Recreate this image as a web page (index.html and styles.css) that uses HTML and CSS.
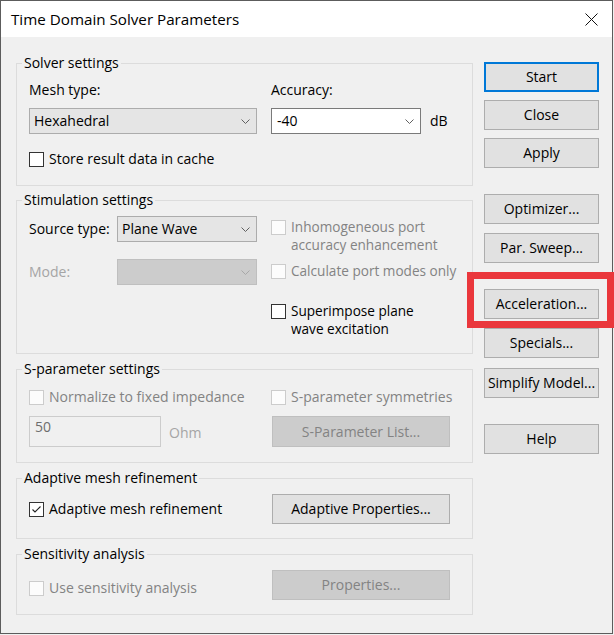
FILE: index.html
```html
<!DOCTYPE html>
<html>
<head>
<meta charset="utf-8">
<title>Time Domain Solver Parameters</title>
<link rel="stylesheet" href="styles.css">
</head>
<body>
<div class="window">
  <div class="titlebar">
    <span class="title">Time Domain Solver Parameters</span>
    <svg class="close-x" width="13" height="13" viewBox="0 0 13 13"><path d="M0.5 0.5L12.5 12.5M12.5 0.5L0.5 12.5" stroke="#111" stroke-width="1" fill="none"/></svg>
  </div>
  <div class="content">
    <div class="groups">
      <fieldset class="group solver">
        <legend>Solver settings</legend>
        <div class="grid">
          <div class="lbl">Mesh type:</div>
          <div class="lbl">Accuracy:</div>
          <div class="combo w228"><span>Hexahedral</span><svg class="chev" width="9" height="5" viewBox="0 0 9 5"><path d="M0.5 0.5L4.5 4.5L8.5 0.5" stroke="#606060" fill="none"/></svg></div>
          <div class="acc">
            <div class="combo editable"><span>-40</span><svg class="chev" width="9" height="5" viewBox="0 0 9 5"><path d="M0.5 0.5L4.5 4.5L8.5 0.5" stroke="#606060" fill="none"/></svg></div>
            <span class="unit">dB</span>
          </div>
          <label class="check store"><span class="box"></span>Store result data in cache</label>
        </div>
      </fieldset>

      <fieldset class="group stim">
        <legend>Stimulation settings</legend>
        <div class="grid">
          <div class="col">
            <div class="field-row first"><span class="flbl">Source type:</span><div class="combo w140"><span>Plane Wave</span><svg class="chev" width="9" height="5" viewBox="0 0 9 5"><path d="M0.5 0.5L4.5 4.5L8.5 0.5" stroke="#606060" fill="none"/></svg></div></div>
            <div class="field-row second"><span class="flbl dim">Mode:</span><div class="combo w140 off"><span></span><svg class="chev" width="9" height="5" viewBox="0 0 9 5"><path d="M0.5 0.5L4.5 4.5L8.5 0.5" stroke="#a8a8a8" fill="none"/></svg></div></div>
          </div>
          <div class="col">
            <label class="check multi off inhom"><span class="box"></span><span class="lines"><span class="ln">Inhomogeneous port</span><span class="ln">accuracy enhancement</span></span></label>
            <label class="check multi off calc"><span class="box"></span><span class="lines"><span class="ln">Calculate port modes only</span></span></label>
            <label class="check multi super"><span class="box"></span><span class="lines"><span class="ln">Superimpose plane</span><span class="ln">wave excitation</span></span></label>
          </div>
        </div>
      </fieldset>

      <fieldset class="group sparam">
        <legend>S-parameter settings</legend>
        <div class="grid">
          <label class="check off r1"><span class="box"></span>Normalize to fixed impedance</label>
          <label class="check off r1"><span class="box"></span>S-parameter symmetries</label>
          <div class="imp-row"><div class="edit off">50</div><span class="ohm">Ohm</span></div>
          <button class="btn wide off tall">S-Parameter List...</button>
        </div>
      </fieldset>

      <fieldset class="group adaptive">
        <legend>Adaptive mesh refinement</legend>
        <div class="grid row-single">
          <label class="check am"><span class="box"><svg width="13" height="13" viewBox="0 0 13 13"><path d="M2.5 6.5L5 9L10.5 3.5" stroke="#222" stroke-width="1.1" fill="none"/></svg></span>Adaptive mesh refinement</label>
          <button class="btn wide">Adaptive Properties...</button>
        </div>
      </fieldset>

      <fieldset class="group sens">
        <legend>Sensitivity analysis</legend>
        <div class="grid row-single">
          <label class="check off sa"><span class="box"></span>Use sensitivity analysis</label>
          <button class="btn wide off">Properties...</button>
        </div>
      </fieldset>
    </div>

    <div class="buttons">
      <button class="btn side default">Start</button>
      <button class="btn side g8">Close</button>
      <button class="btn side g8">Apply</button>
      <button class="btn side g26">Optimizer...</button>
      <button class="btn side g9">Par. Sweep...</button>
      <button class="btn side g26">Acceleration...</button>
      <button class="btn side g9">Specials...</button>
      <button class="btn side g10">Simplify Model...</button>
      <button class="btn side g26">Help</button>
    </div>
  </div>
  <div class="highlight"></div>
</div>
</body>
</html>
```

FILE: styles.css
```css
html, body {
  margin: 0;
  padding: 0;
  background: #f0f0f0;
}

body {
  font-family: "Open Sans", "Noto Sans", sans-serif;
  font-size: 14px;
  color: #000;
  line-height: 20px;
}

.window {
  position: relative;
  width: 613px;
  height: 634px;
  box-sizing: border-box;
  border: 1px solid #5c5c5c;
  background: #f0f0f0;
}

.titlebar {
  height: 36px;
  background: #fff;
  display: flex;
  align-items: center;
  justify-content: space-between;
  padding-left: 10px;
}

.title {
  font-size: 15.2px;
  line-height: 20px;
}

.close-x {
  margin-right: 14px;
  margin-top: 1px;
}

.content {
  display: flex;
  padding-left: 15px;
}

.groups {
  width: 457px;
  padding-top: 16px;
}

.group {
  margin: 0;
  border: 1px solid #dcdcdc;
  padding: 0 12px 16px 12px;
  min-width: 0;
}

.group legend {
  padding: 0 2px;
  margin-left: -7px;
  line-height: 20px;
}

.grid {
  display: grid;
  grid-template-columns: 228px 1fr;
  column-gap: 14px;
}

/* solver */
.solver .grid {
  margin-top: 7px;
  row-gap: 8px;
}

.solver .lbl {
  height: 20px;
}

.combo {
  box-sizing: border-box;
  height: 26px;
  border: 1px solid #acacac;
  background: #e5e5e5;
  display: flex;
  align-items: center;
  justify-content: space-between;
  padding: 0 6px 0 4px;
}

.combo.w228 { width: 228px; }
.combo.w140 { width: 140px; }

.combo.editable {
  width: 150px;
  background: #fff;
  border-color: #7a7a7a;
  padding-left: 5px;
}

.combo.off {
  background: #cccccc;
  border-color: #bfbfbf;
}

.acc {
  display: flex;
  align-items: center;
}

.unit {
  margin-left: 9px;
}

.check {
  display: flex;
  align-items: center;
  gap: 5px;
  white-space: nowrap;
  height: 20px;
}

.box {
  box-sizing: border-box;
  width: 15px;
  height: 15px;
  border: 1px solid #333;
  background: #fff;
  flex: none;
  display: flex;
  align-items: center;
  justify-content: center;
}

.check.off {
  color: #838383;
}

.check.off .box {
  border-color: #cccccc;
  background: #fcfcfc;
}

.check.store {
  margin-top: 7px;
}

/* stimulation */
.stim {
  margin-top: 4px;
  padding-bottom: 14.5px;
}

.col {
  display: flex;
  flex-direction: column;
  align-items: flex-start;
}

.field-row {
  display: flex;
  align-items: center;
  height: 26px;
}

.field-row.first { margin-top: 6px; }
.field-row.second { margin-top: 17px; }

.flbl {
  width: 88px;
}

.dim {
  color: #a5a5a5;
}

.check.multi {
  align-items: flex-start;
  height: auto;
}

.check.multi .box {
  margin-top: 2px;
}

.lines {
  display: flex;
  flex-direction: column;
}

.ln {
  display: block;
  height: 18.5px;
  line-height: 18.5px;
  font-size: 13.6px;
}

.check.inhom { margin-top: 7.5px; }
.check.calc { margin-top: 7px; }
.check.super { margin-top: 21.5px; }

/* s-parameter */
.sparam {
  margin-top: 5px;
  padding-bottom: 15px;
}

.sparam .grid {
  row-gap: 9px;
}

.check.r1 {
  margin-top: 8px;
}

.imp-row {
  display: flex;
  align-items: flex-start;
}

.edit {
  box-sizing: border-box;
  width: 132px;
  height: 31px;
  border: 1px solid #cccccc;
  background: #f0f0f0;
  padding: 0 5px;
  line-height: 20px;
  color: #6d6d6d;
}

.ohm {
  margin-left: 8px;
  margin-top: 7px;
  color: #a5a5a5;
}

/* buttons */
.btn {
  box-sizing: border-box;
  height: 30px;
  border: 1px solid #adadad;
  background: #e1e1e1;
  font: inherit;
  color: #000;
  padding: 0;
  margin: 0;
  display: flex;
  align-items: center;
  justify-content: center;
  white-space: nowrap;
}

.btn.wide {
  width: 178px;
  margin-left: 1px;
}

.btn.tall {
  height: 31px;
}

.btn.off {
  background: #cccccc;
  border-color: #bfbfbf;
  color: #838383;
}

.btn.default {
  border: 2px solid #0078d7;
}

/* adaptive + sensitivity */
.adaptive,
.sens {
  margin-top: 5px;
  padding-bottom: 14px;
}

.row-single {
  margin-top: 6px;
  align-items: start;
}

.check.am { margin-top: 5px; }
.check.sa { margin-top: 8px; }

/* side buttons */
.buttons {
  margin-left: 11px;
  margin-top: 25px;
  display: flex;
  flex-direction: column;
}

.btn.side {
  width: 115px;
}

.g8 { margin-top: 8px; }
.g9 { margin-top: 9px; }
.g10 { margin-top: 10px; }
.g26 { margin-top: 26px; }

.highlight {
  position: absolute;
  left: 466px;
  top: 271px;
  width: 147px;
  height: 56px;
  box-sizing: border-box;
  border: 7px solid #ea373c;
}
```
